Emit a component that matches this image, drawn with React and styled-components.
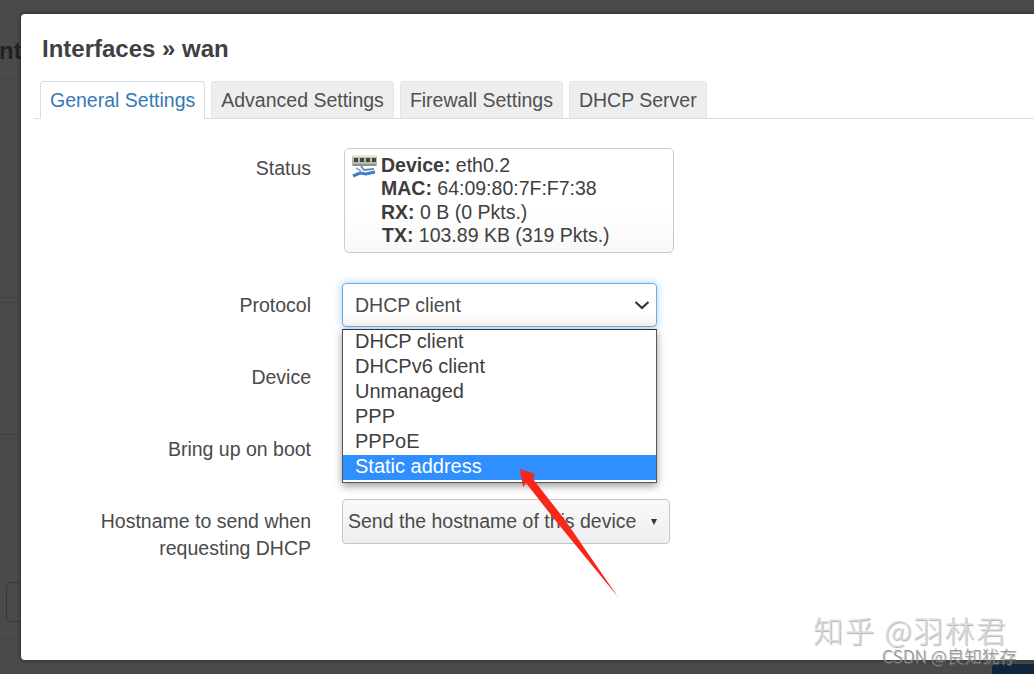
import * as React from "react";
import styled, { createGlobalStyle } from "styled-components";

const Global = createGlobalStyle`
  html, body {
    margin: 0;
    padding: 0;
    background: #4a4a4a;
  }
  body {
    font-family: "Liberation Sans", Arial, sans-serif;
    color: #404040;
  }
`;

const Page = styled.div`
  position: relative;
  width: 1034px;
  height: 674px;
  overflow: hidden;
  background: #4a4a4a;
  padding: 14px 0 14px 21px;
  box-sizing: border-box;
`;

/* the page that sits dimmed behind the modal */
const Behind = styled.div`
  position: absolute;
  inset: 0;
`;

const BehindTitle = styled.div`
  position: absolute;
  left: -1px;
  top: 37px;
  font-size: 24px;
  font-weight: 700;
  color: #222;
`;

const BehindLine = styled.div`
  position: absolute;
  left: 0;
  width: 21px;
  top: ${(p) => p.$top}px;
  height: 1px;
  background: #424242;
`;

const BehindButton = styled.div`
  position: absolute;
  left: 6px;
  top: 582px;
  width: 24px;
  height: 40px;
  border: 1px solid #2f3f38;
  border-radius: 5px;
  box-sizing: border-box;
`;

const CornerBar = styled.div`
  position: absolute;
  right: 0;
  bottom: 0;
  width: 42px;
  height: 10px;
  background: #10263c;
  border-top-left-radius: 4px;
`;

const Modal = styled.div`
  position: relative;
  height: 646px;
  background: #fff;
  border-radius: 4px 0 0 4px;
  box-shadow: 0 0 4px rgba(0, 0, 0, 0.5);
  padding: 21px 0 0 21px;
  box-sizing: border-box;
`;

const Title = styled.h2`
  margin: 0;
  font-size: 24px;
  line-height: 28px;
  font-weight: 700;
  color: #404040;
`;

const Tabs = styled.ul`
  display: flex;
  gap: 6px;
  list-style: none;
  margin: 18px 0 0 -8px;
  padding: 0 0 0 6px;
  height: 37px;
  border-bottom: 1px solid #ddd;
`;

const Tab = styled.li`
  height: 38px;
  box-sizing: border-box;
  padding: 0 9px;
  font-size: 19.5px;
  line-height: 36px;
  white-space: nowrap;
  border: 1px solid ${(p) => (p.$active ? "#d5dde3" : "#e4e4e4")};
  border-bottom: ${(p) => (p.$active ? "1px solid #fff" : "1px solid #ddd")};
  border-radius: 4px 4px 0 0;
  background: ${(p) => (p.$active ? "#fff" : "#eeeeee")};
  color: ${(p) => (p.$active ? "#337ab7" : "#505050")};
`;

const Form = styled.div`
  display: grid;
  grid-template-columns: 269px 1fr;
  column-gap: 31px;
  margin-top: 29px;
`;

const Label = styled.div`
  text-align: right;
  font-size: 19.5px;
  line-height: 27px;
  padding-top: ${(p) => p.$pad ?? 9}px;
  color: #4a4a4a;
`;

const Field = styled.div`
  min-height: 44px;
  margin-bottom: ${(p) => p.$gap ?? 28}px;
`;

const StatusBox = styled.div`
  display: flex;
  gap: 4px;
  width: 330px;
  height: 105px;
  margin-left: 2px;
  box-sizing: border-box;
  padding: 5px 7px;
  border: 1px solid #ccc;
  border-radius: 5px;
  background: linear-gradient(#fff 60%, #f8f8f8);
  font-size: 19.5px;
  line-height: 23.4px;
`;

const StatusIcon = styled.svg`
  width: 25px;
  height: 24px;
  flex: none;
  margin-top: 1px;
`;

const StatusLines = styled.div`
  display: flex;
  flex-direction: column;
`;

const StatusLine = styled.div`
  white-space: nowrap;
  padding-left: ${(p) => p.$indent ?? 0}px;

  b {
    color: #3c3c3c;
  }
`;

const FocusSelect = styled.div`
  display: flex;
  align-items: center;
  justify-content: space-between;
  width: 315px;
  height: 44px;
  box-sizing: border-box;
  padding: 0 5px 0 12px;
  font-size: 19.5px;
  background: linear-gradient(#fff 70%, #f6f1ee);
  border: 1px solid #66afe9;
  border-radius: 4px;
  box-shadow: 0 0 8px rgba(102, 175, 233, 0.6);
  color: #4a4a4a;
`;

const Chevron = styled.svg`
  width: 18px;
  height: 18px;
`;

const DropList = styled.ul`
  position: absolute;
  left: 321px;
  top: 315px;
  width: 315px;
  box-sizing: border-box;
  margin: 0;
  padding: 0 0 2px;
  list-style: none;
  background: #fff;
  border: 1px solid #555;
  border-top-color: #333;
  box-shadow: 0 3px 8px rgba(0, 0, 0, 0.4);
  font-size: 20px;
  z-index: 2;
`;

const DropItem = styled.li`
  height: 25px;
  line-height: 22px;
  padding-left: 12px;
  background: ${(p) => (p.$selected ? "#2f8fff" : "#fff")};
  color: ${(p) => (p.$selected ? "#fff" : "#404040")};
`;

const GraySelect = styled.div`
  display: flex;
  align-items: center;
  justify-content: space-between;
  width: 328px;
  height: 45px;
  box-sizing: border-box;
  padding: 0 12px 0 5px;
  font-size: 19.5px;
  background: linear-gradient(#fafafa, #eeeeee);
  border: 1px solid #c6c6c6;
  border-radius: 4px;
  color: #4a4a4a;
`;

const Caret = styled.span`
  width: 0;
  height: 0;
  border-left: 3.5px solid transparent;
  border-right: 3.5px solid transparent;
  border-top: 6px solid #333;
`;

const Arrow = styled.svg`
  position: absolute;
  left: 0;
  top: 0;
  width: 1034px;
  height: 674px;
  pointer-events: none;
  z-index: 3;
`;

const Watermark = styled.div`
  position: absolute;
  left: ${(p) => p.$left}px;
  top: ${(p) => p.$top}px;
  font-family: "Noto Sans CJK SC", "Liberation Sans", sans-serif;
  font-size: ${(p) => p.$size}px;
  font-weight: 300;
  line-height: 1;
  white-space: nowrap;
  color: ${(p) => p.$color};
  text-shadow: 1px 1px 1px rgba(120, 120, 120, 0.6);
  letter-spacing: ${(p) => p.$spacing ?? 0}px;
  z-index: 4;
`;

const options = ["DHCP client", "DHCPv6 client", "Unmanaged", "PPP", "PPPoE", "Static address"];
const tabs = ["General Settings", "Advanced Settings", "Firewall Settings", "DHCP Server"];

const App = () => (
  <Page>
    <Global />
    <Behind>
      <BehindTitle>nt</BehindTitle>
      <BehindLine $top={78} />
      <BehindLine $top={297} />
      <BehindLine $top={302} />
      <BehindLine $top={434} />
      <BehindLine $top={438} />
      <BehindLine $top={638} />
      <BehindButton />
      <CornerBar />
    </Behind>
    <Modal>
      <Title>Interfaces » wan</Title>
      <Tabs>
        {tabs.map((t, i) => (
          <Tab key={t} $active={i === 0}>
            {t}
          </Tab>
        ))}
      </Tabs>
      <Form>
        <Label $pad={7}>Status</Label>
        <Field $gap={30}>
          <StatusBox>
            <StatusIcon viewBox="0 0 25 24">
              <rect x="0" y="0" width="25" height="11" fill="#b9bbae" />
              <rect x="0" y="0" width="25" height="2" fill="#e8e8e0" />
              <rect x="2" y="3" width="4" height="4" fill="#3f4a3a" />
              <rect x="8" y="3" width="4" height="4" fill="#3f4a3a" />
              <rect x="14" y="3" width="4" height="4" fill="#3f4a3a" />
              <rect x="20" y="3" width="4" height="4" fill="#3f4a3a" />
              <rect x="1" y="9" width="23" height="2" fill="#8f9384" />
              <path d="M9 11 L12 15 L22 14" stroke="#5b8fc4" strokeWidth="2" fill="none" />
              <path d="M1 21 L8 18 L14 19 L23 17" stroke="#3f7fc0" strokeWidth="3" fill="none" />
              <path d="M4 13 L9 16" stroke="#8aa9c9" strokeWidth="2" fill="none" />
            </StatusIcon>
            <StatusLines>
              <StatusLine>
                <b>Device:</b> eth0.2
              </StatusLine>
              <StatusLine>
                <b>MAC:</b> 64:09:80:7F:F7:38
              </StatusLine>
              <StatusLine>
                <b>RX:</b> 0 B (0 Pkts.)
              </StatusLine>
              <StatusLine $indent={1}>
                <b>TX:</b> 103.89 KB (319 Pkts.)
              </StatusLine>
            </StatusLines>
          </StatusBox>
        </Field>

        <Label>Protocol</Label>
        <Field>
          <FocusSelect>
            DHCP client
            <Chevron viewBox="0 0 18 18">
              <path d="M2.5 6 L9 12 L15.5 6" stroke="#333" strokeWidth="2.2" fill="none" />
            </Chevron>
          </FocusSelect>
        </Field>

        <Label>Device</Label>
        <Field />

        <Label>Bring up on boot</Label>
        <Field />

        <Label>
          Hostname to send when
          <br />
          requesting DHCP
        </Label>
        <Field>
          <GraySelect>
            Send the hostname of this device
            <Caret />
          </GraySelect>
        </Field>
      </Form>
      <DropList>
        {options.map((o, i) => (
          <DropItem key={o} $selected={i === options.length - 1}>
            {o}
          </DropItem>
        ))}
      </DropList>
    </Modal>
    <Arrow viewBox="0 0 1034 674">
      <polygon
        points="520,469 535,474 533,479 565,520 618,597 555,520 526,483 523,487"
        fill="#f9261c"
      />
    </Arrow>
    <Watermark $left={813} $top={614} $size={30} $color="#dcdcdc" $spacing={1.5}>
      知乎 @羽林君
    </Watermark>
    <Watermark $left={882} $top={647} $size={17.5} $color="#8f8f8f">
      CSDN @良知犹存
    </Watermark>
  </Page>
);

export default App;
